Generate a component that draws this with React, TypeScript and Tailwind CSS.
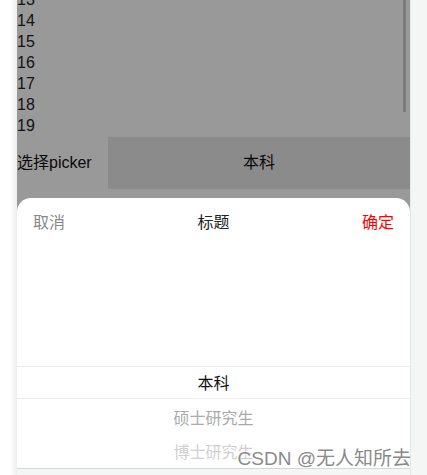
import type { FC } from 'react';

const cjk = { fontFamily: '"Liberation Sans", "Noto Sans CJK SC", sans-serif' };

const numbers = [13, 14, 15, 16, 17, 18, 19];

const options = [
  { label: '本科', tone: 'text-[#111]' },
  { label: '硕士研究生', tone: 'text-[#aaa]' },
  { label: '博士研究生', tone: 'text-[#d0d0d0]' },
];

const PickerSheet: FC = () => (
  <div className="absolute inset-x-0 bottom-0 top-[198px] flex flex-col rounded-t-[14px] bg-white">
    <div className="flex h-[50px] items-center justify-between px-4 text-[16px]">
      <span className="text-[#888]">取消</span>
      <span className="text-[#222]">标题</span>
      <span className="text-[#f00]">确定</span>
    </div>
    <div className="flex-1 pt-[118px]">
      <div className="flex h-[33px] items-center justify-center border-y border-[#eee] pt-[3px] text-[16px] text-[#111]">
        {options[0].label}
      </div>
      {options.slice(1).map((o) => (
        <div key={o.label} className={`flex h-[34px] items-center justify-center pt-[6px] text-[16px] ${o.tone}`}>
          {o.label}
        </div>
      ))}
    </div>
    <div className="h-[7px] border-t border-[#d6d6d6] bg-[#f4f5f5]" />
  </div>
);

export default function App() {
  return (
    <div className="relative flex h-[475px] w-[427px] overflow-hidden bg-[#f4f5f5]" style={cjk}>
      <div className="w-[17px] bg-gradient-to-r from-white from-60% to-[#eceeee]" />
      <div className="relative h-full w-[393px] overflow-hidden bg-white">
        <div className="-mt-[11px] text-[16px] leading-[21px] text-[#222]">
          {numbers.map((n) => (
            <div key={n}>{n}</div>
          ))}
        </div>
        <div className="absolute right-[4px] top-0 h-[112px] w-[3px] bg-[#cdcdcd]" />
        <div className="mt-[1px] flex h-[52px] items-center text-[16px] text-[#111]">
          <span className="w-[91px] whitespace-nowrap">选择picker</span>
          <div className="flex h-full flex-1 items-center justify-center bg-[#e8e8e8]">本科</div>
        </div>
        <div className="absolute inset-0 bg-black/40" />
        <PickerSheet />
      </div>
      <div className="w-[17px] border-l border-[#e6e8e8] bg-[#f4f5f5]" />
      <span
        className="absolute bottom-[7px] right-[16px] text-[19px] leading-none text-[#8a8a8a]"
        style={{ textShadow: '0 0 2px #fff, 0 0 2px #fff' }}
      >
        CSDN @无人知所去
      </span>
    </div>
  );
}
